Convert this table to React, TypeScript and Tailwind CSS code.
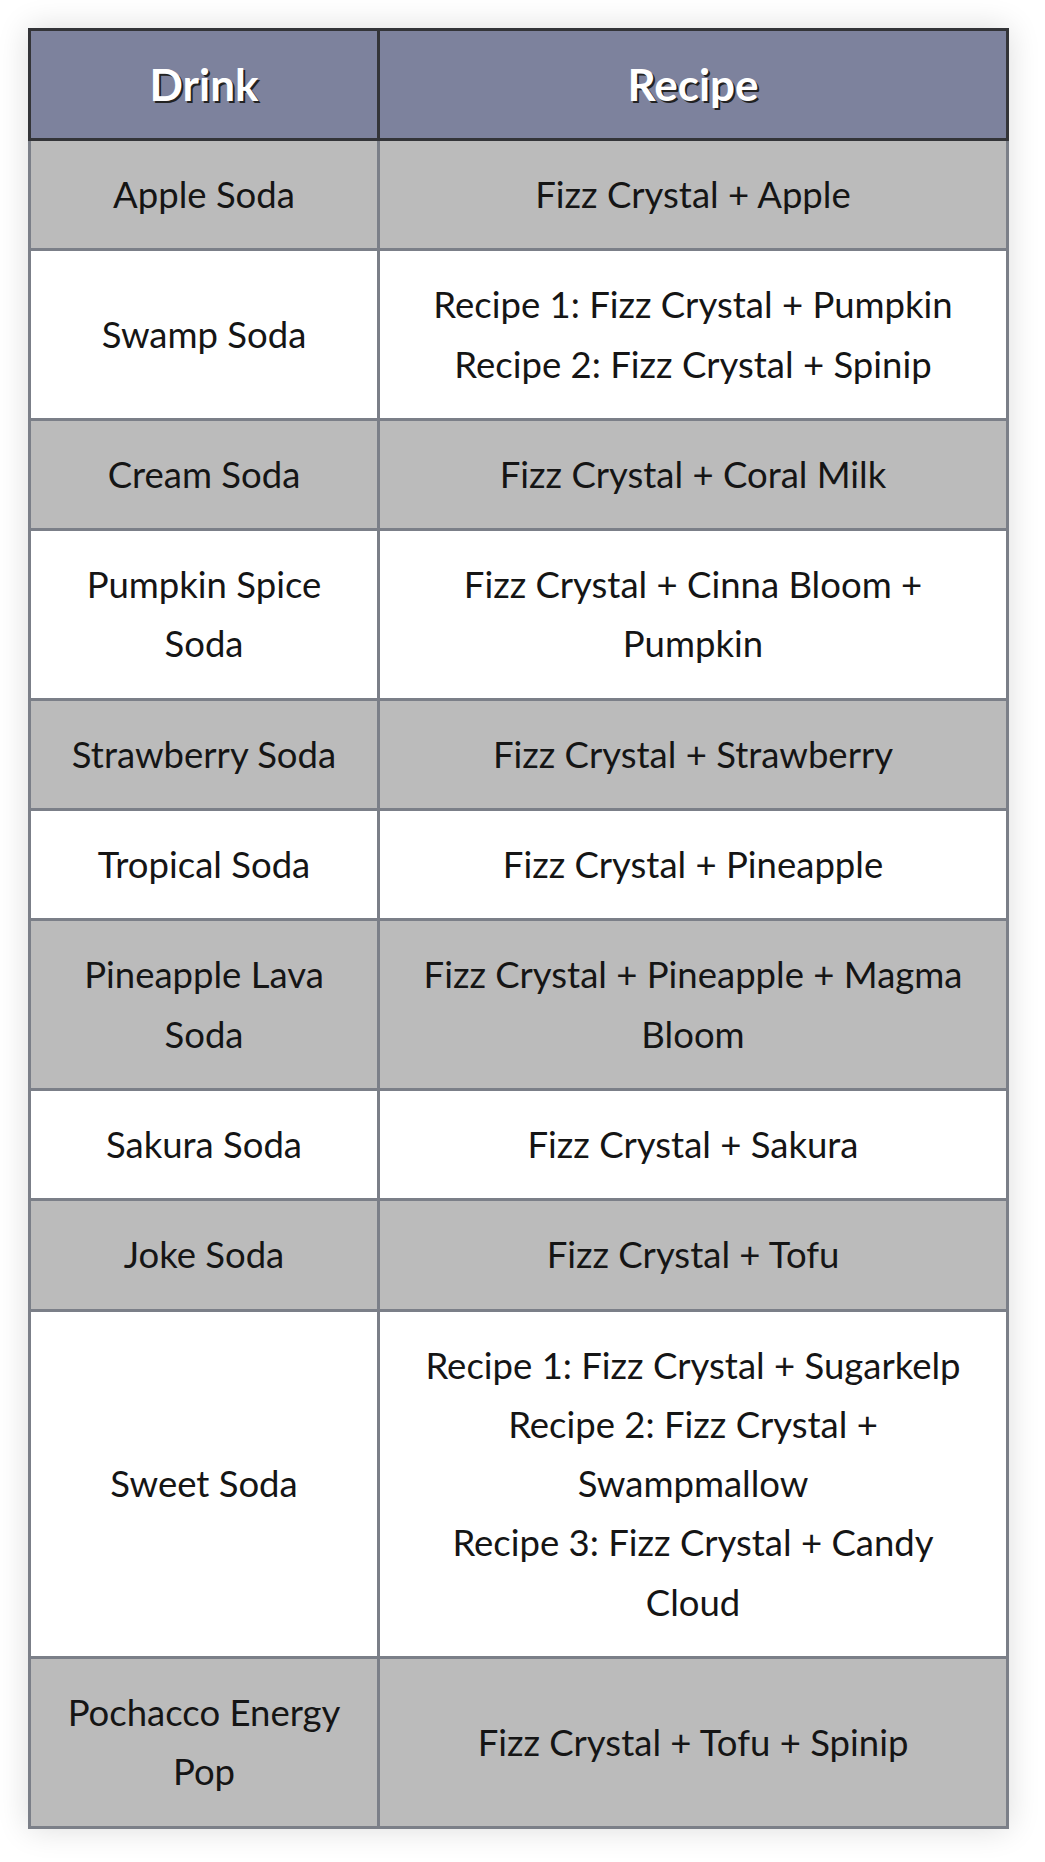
const rows: { drink: string[]; recipe: string[] }[] = [
  { drink: ["Apple Soda"], recipe: ["Fizz Crystal + Apple"] },
  { drink: ["Swamp Soda"], recipe: ["Recipe 1: Fizz Crystal + Pumpkin", "Recipe 2: Fizz Crystal + Spinip"] },
  { drink: ["Cream Soda"], recipe: ["Fizz Crystal + Coral Milk"] },
  { drink: ["Pumpkin Spice", "Soda"], recipe: ["Fizz Crystal + Cinna Bloom +", "Pumpkin"] },
  { drink: ["Strawberry Soda"], recipe: ["Fizz Crystal + Strawberry"] },
  { drink: ["Tropical Soda"], recipe: ["Fizz Crystal + Pineapple"] },
  { drink: ["Pineapple Lava", "Soda"], recipe: ["Fizz Crystal + Pineapple + Magma", "Bloom"] },
  { drink: ["Sakura Soda"], recipe: ["Fizz Crystal + Sakura"] },
  { drink: ["Joke Soda"], recipe: ["Fizz Crystal + Tofu"] },
  {
    drink: ["Sweet Soda"],
    recipe: [
      "Recipe 1: Fizz Crystal + Sugarkelp",
      "Recipe 2: Fizz Crystal +",
      "Swampmallow",
      "Recipe 3: Fizz Crystal + Candy",
      "Cloud",
    ],
  },
  { drink: ["Pochacco Energy", "Pop"], recipe: ["Fizz Crystal + Tofu + Spinip"] },
];

function Lines({ lines }: { lines: string[] }) {
  return (
    <>
      {lines.map((l, i) => (
        <span key={i} className="block whitespace-nowrap">
          {l}
        </span>
      ))}
    </>
  );
}

export default function App() {
  return (
    <div className="min-h-[1862px] bg-white pl-[28px] pt-[28px] font-['Lato','Liberation_Sans',sans-serif] text-[#151515]">
      <table className="w-[981px] table-fixed border-collapse text-center text-[36.5px] leading-[59.3px] shadow-[0_0_30px_rgba(0,0,0,0.14)]">
        <colgroup>
          <col className="w-[349px]" />
          <col />
        </colgroup>
        <thead>
          <tr className="bg-[#7d829d] text-white">
            {["Drink", "Recipe"].map((h) => (
              <th
                key={h}
                className="h-[110px] border-[3px] border-[#333438] text-[44px] font-bold [text-shadow:2px_2px_0_#222]"
              >
                {h}
              </th>
            ))}
          </tr>
        </thead>
        <tbody>
          {rows.map((r, i) => (
            <tr key={i} className={i % 2 === 0 ? "bg-[#bbbbbb]" : "bg-white"}>
              <td className="border-[3px] border-[#7b7f88] px-4 py-[24px]">
                <Lines lines={r.drink} />
              </td>
              <td className="border-[3px] border-[#7b7f88] px-4 py-[24px]">
                <Lines lines={r.recipe} />
              </td>
            </tr>
          ))}
        </tbody>
      </table>
    </div>
  );
}
